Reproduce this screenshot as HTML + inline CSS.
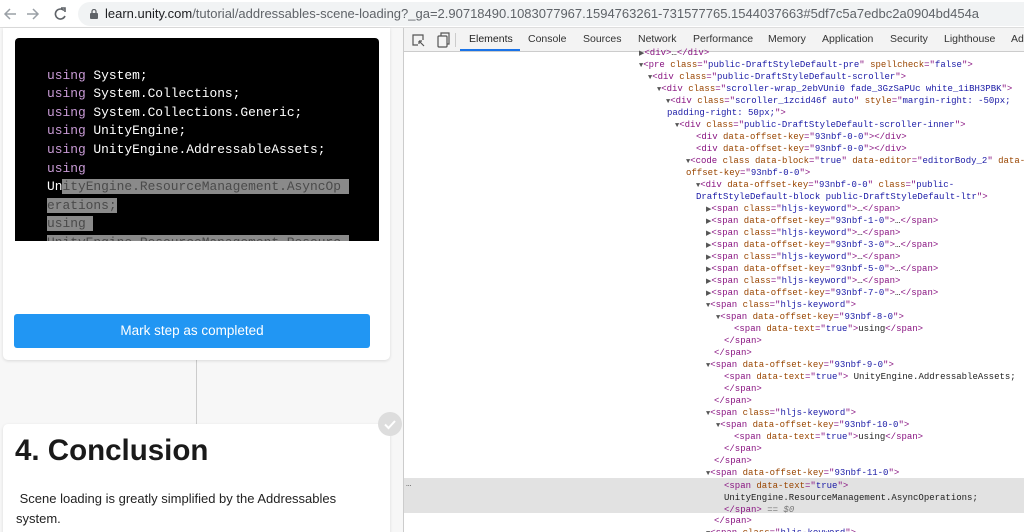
<!DOCTYPE html>
<html style="overflow:hidden;height:532px"><head><meta charset="utf-8"><style>
*{margin:0;padding:0;box-sizing:border-box}
body{width:1024px;height:532px;overflow:hidden;background:#fff;font-family:"Liberation Sans",sans-serif;position:relative}
.top{position:absolute;left:0;top:0;width:1024px;height:28px;background:#fff;border-bottom:1px solid #ddd}
.url{position:absolute;left:78px;top:2px;width:960px;height:24px;border-radius:12px;background:#f1f3f4;font-size:13px;line-height:24px;color:#5f6368;padding-left:27px;white-space:nowrap}
.url b{font-weight:normal;color:#202124}
.left{position:absolute;left:0;top:28px;width:403px;height:504px;background:#f7f7f7;overflow:hidden}
.card{position:absolute;background:#fff;border-radius:5px;box-shadow:0 1px 3px rgba(0,0,0,.12)}
.code{position:absolute;left:15px;top:38px;width:364px;height:203px;background:#000;border-radius:4px 4px 0 0;overflow:hidden;font-family:"Liberation Mono",monospace;font-size:12.9px;color:#fff}
.code div{position:absolute;left:32px;white-space:pre;height:18.6px;line-height:18.6px}
.k{color:#c99bd6}
.sel{background:#8a8a8a;color:#4a4a4a}
.btn{position:absolute;left:14px;top:314px;width:356px;height:34px;background:#2196f3;border-radius:3px;color:#fff;font-size:13.5px;text-align:center;line-height:34px}
.dt{position:absolute;left:403px;top:28px;width:621px;height:504px;background:#fff;border-left:1px solid #ccc}
.tabs{position:absolute;left:0;top:0;width:621px;height:24px;background:#f3f3f3;border-bottom:1px solid #ccc;font-size:10.5px;color:#333}
.tabs span{position:absolute;top:5px}
.l{position:absolute;font-family:"Liberation Mono",monospace;font-size:9px;line-height:12px;white-space:pre;color:#222}
.t{color:#881280}.a{color:#994500}.v{color:#1a1aa6}
.tr{color:#555;font-size:7px}
</style></head><body>
<div class="top">
<svg style="position:absolute;left:2px;top:6px" width="80" height="16" viewBox="0 0 80 16"><g fill="none" stroke="#9aa0a6" stroke-width="1.5"><path d="M14 8H3M8 3L3 8l5 5"/><path d="M25 8h11M31 3l5 5-5 5"/></g><g fill="none" stroke="#5f6368" stroke-width="1.6"><path d="M62 4.5A5 5 0 1 0 63 10"/><path d="M59 2h4v4" /></g></svg>
<div class="url"><svg style="position:absolute;left:12px;top:7px" width="8" height="10" viewBox="0 0 8 10"><rect x="0" y="4" width="8" height="6" rx="1" fill="#5f6368"/><path d="M2 4V2.5a2 2 0 0 1 4 0V4" fill="none" stroke="#5f6368" stroke-width="1.3"/></svg><b>learn.unity.com</b>/tutorial/addressables-scene-loading?_ga=2.90718490.1083077967.1594763261-731577765.1544037663#5df7c5a7edbc2a0904bd454a</div>
</div>
<div class="left">
<div style="position:absolute;left:196px;top:330px;width:1px;height:66px;background:#ccc"></div>
<div class="card" style="left:3px;top:396px;width:387px;height:120px"></div>
</div>
<div class="card" style="left:3px;top:28px;width:387px;height:332px;border-radius:0 0 5px 5px"></div>
<div class="code">
<div style="top:28.5px"><span class="k">using</span> System;</div>
<div style="top:47px"><span class="k">using</span> System.Collections;</div>
<div style="top:65.7px"><span class="k">using</span> System.Collections.Generic;</div>
<div style="top:84.3px"><span class="k">using</span> UnityEngine;</div>
<div style="top:103px"><span class="k">using</span> UnityEngine.AddressableAssets;</div>
<div style="top:121.5px"><span class="k">using</span></div>
<div style="top:140px">Un<span class="sel">ityEngine.ResourceManagement.AsyncOp </span></div>
<div style="top:158.7px"><span class="sel">erations;</span></div>
<div style="top:177.3px"><span class="sel">using </span></div>
<div style="top:196px"><span class="sel">UnityEngine.ResourceManagement.Resourc </span></div>
</div>
<div class="btn">Mark step as completed</div>
<div style="position:absolute;left:378px;top:412px;width:24px;height:24px;border-radius:50%;background:#ddd"><svg width="24" height="24"><path d="M7 12.5l3.5 3.5L17 9" fill="none" stroke="#fff" stroke-width="2"/></svg></div>
<div style="position:absolute;left:15px;top:434px;font-size:29.5px;font-weight:bold;color:#1a1a1a">4. Conclusion</div>
<div style="position:absolute;left:16px;top:489px;font-size:13px;line-height:20px;color:#222;width:360px"> &nbsp;Scene loading is greatly simplified by the Addressables system.</div>

<div class="dt">
<div class="tabs">
<svg style="position:absolute;left:6px;top:4px" width="44" height="16"><g fill="none" stroke="#555" stroke-width="1.2"><path d="M8 13H3V3h10v5"/><path d="M9 9l5 5M9 9h3M9 9v3"/><rect x="28" y="4" width="9" height="11" rx="1"/><path d="M31 4V1h8v11h-2"/></g></svg>
<div style="position:absolute;left:51px;top:5px;width:1px;height:14px;background:#ccc"></div>
<span style="left:65px;color:#222">Elements</span>
<div style="position:absolute;left:56px;top:21px;width:60px;height:2px;background:#1a73e8"></div>
<span style="left:124px">Console</span><span style="left:179px">Sources</span><span style="left:234px">Network</span><span style="left:289px">Performance</span><span style="left:364px">Memory</span><span style="left:418px">Application</span><span style="left:486px">Security</span><span style="left:540px">Lighthouse</span><span style="left:607px">Adb</span>
</div>
<div style="position:absolute;left:0;top:450px;width:621px;height:35px;background:#e2e2e2"></div>
<div class="l" style="left:2px;top:450px;color:#666">…</div>
</div>
<div class="l" style="left:639px;top:47px"><span class="tr">▶</span><span class="t">&lt;div&gt;</span>…<span class="t">&lt;/div&gt;</span></div>
<div class="l" style="left:639px;top:59px"><span class="tr">▼</span><span class="t">&lt;pre </span><span class="a">class</span><span class="t">="</span><span class="v">public-DraftStyleDefault-pre</span><span class="t">" </span><span class="a">spellcheck</span><span class="t">="</span><span class="v">false</span><span class="t">"&gt;</span></div>
<div class="l" style="left:648px;top:71px"><span class="tr">▼</span><span class="t">&lt;div </span><span class="a">class</span><span class="t">="</span><span class="v">public-DraftStyleDefault-scroller</span><span class="t">"&gt;</span></div>
<div class="l" style="left:657px;top:83px"><span class="tr">▼</span><span class="t">&lt;div </span><span class="a">class</span><span class="t">="</span><span class="v">scroller-wrap_2ebVUni0 fade_3GzSaPUc white_1iBH3PBK</span><span class="t">"&gt;</span></div>
<div class="l" style="left:666px;top:95px"><span class="tr">▼</span><span class="t">&lt;div </span><span class="a">class</span><span class="t">="</span><span class="v">scroller_1zcid46f auto</span><span class="t">" </span><span class="a">style</span><span class="t">="</span><span class="v">margin-right: -50px;</span></div>
<div class="l" style="left:667px;top:107px"><span class="v">padding-right: 50px;</span><span class="t">"&gt;</span></div>
<div class="l" style="left:675px;top:119px"><span class="tr">▼</span><span class="t">&lt;div </span><span class="a">class</span><span class="t">="</span><span class="v">public-DraftStyleDefault-scroller-inner</span><span class="t">"&gt;</span></div>
<div class="l" style="left:696px;top:131px"><span class="t">&lt;div </span><span class="a">data-offset-key</span><span class="t">="</span><span class="v">93nbf-0-0</span><span class="t">"&gt;&lt;/div&gt;</span></div>
<div class="l" style="left:696px;top:143px"><span class="t">&lt;div </span><span class="a">data-offset-key</span><span class="t">="</span><span class="v">93nbf-0-0</span><span class="t">"&gt;&lt;/div&gt;</span></div>
<div class="l" style="left:686px;top:155px"><span class="tr">▼</span><span class="t">&lt;code </span><span class="a">class data-block</span><span class="t">="</span><span class="v">true</span><span class="t">" </span><span class="a">data-editor</span><span class="t">="</span><span class="v">editorBody_2</span><span class="t">" </span><span class="a">data-</span></div>
<div class="l" style="left:686px;top:167px"><span class="a">offset-key</span><span class="t">="</span><span class="v">93nbf-0-0</span><span class="t">"&gt;</span></div>
<div class="l" style="left:696px;top:179px"><span class="tr">▼</span><span class="t">&lt;div </span><span class="a">data-offset-key</span><span class="t">="</span><span class="v">93nbf-0-0</span><span class="t">" </span><span class="a">class</span><span class="t">="</span><span class="v">public-</span></div>
<div class="l" style="left:696px;top:191px"><span class="v">DraftStyleDefault-block public-DraftStyleDefault-ltr</span><span class="t">"&gt;</span></div>
<div class="l" style="left:706px;top:203px"><span class="tr">▶</span><span class="t">&lt;span </span><span class="a">class</span><span class="t">="</span><span class="v">hljs-keyword</span><span class="t">"&gt;</span>…<span class="t">&lt;/span&gt;</span></div>
<div class="l" style="left:706px;top:215px"><span class="tr">▶</span><span class="t">&lt;span </span><span class="a">data-offset-key</span><span class="t">="</span><span class="v">93nbf-1-0</span><span class="t">"&gt;</span>…<span class="t">&lt;/span&gt;</span></div>
<div class="l" style="left:706px;top:227px"><span class="tr">▶</span><span class="t">&lt;span </span><span class="a">class</span><span class="t">="</span><span class="v">hljs-keyword</span><span class="t">"&gt;</span>…<span class="t">&lt;/span&gt;</span></div>
<div class="l" style="left:706px;top:239px"><span class="tr">▶</span><span class="t">&lt;span </span><span class="a">data-offset-key</span><span class="t">="</span><span class="v">93nbf-3-0</span><span class="t">"&gt;</span>…<span class="t">&lt;/span&gt;</span></div>
<div class="l" style="left:706px;top:251px"><span class="tr">▶</span><span class="t">&lt;span </span><span class="a">class</span><span class="t">="</span><span class="v">hljs-keyword</span><span class="t">"&gt;</span>…<span class="t">&lt;/span&gt;</span></div>
<div class="l" style="left:706px;top:263px"><span class="tr">▶</span><span class="t">&lt;span </span><span class="a">data-offset-key</span><span class="t">="</span><span class="v">93nbf-5-0</span><span class="t">"&gt;</span>…<span class="t">&lt;/span&gt;</span></div>
<div class="l" style="left:706px;top:275px"><span class="tr">▶</span><span class="t">&lt;span </span><span class="a">class</span><span class="t">="</span><span class="v">hljs-keyword</span><span class="t">"&gt;</span>…<span class="t">&lt;/span&gt;</span></div>
<div class="l" style="left:706px;top:287px"><span class="tr">▶</span><span class="t">&lt;span </span><span class="a">data-offset-key</span><span class="t">="</span><span class="v">93nbf-7-0</span><span class="t">"&gt;</span>…<span class="t">&lt;/span&gt;</span></div>
<div class="l" style="left:706px;top:299px"><span class="tr">▼</span><span class="t">&lt;span </span><span class="a">class</span><span class="t">="</span><span class="v">hljs-keyword</span><span class="t">"&gt;</span></div>
<div class="l" style="left:716px;top:311px"><span class="tr">▼</span><span class="t">&lt;span </span><span class="a">data-offset-key</span><span class="t">="</span><span class="v">93nbf-8-0</span><span class="t">"&gt;</span></div>
<div class="l" style="left:734px;top:323px"><span class="t">&lt;span </span><span class="a">data-text</span><span class="t">="</span><span class="v">true</span><span class="t">"&gt;</span>using<span class="t">&lt;/span&gt;</span></div>
<div class="l" style="left:724px;top:335px"><span class="t">&lt;/span&gt;</span></div>
<div class="l" style="left:714px;top:347px"><span class="t">&lt;/span&gt;</span></div>
<div class="l" style="left:706px;top:359px"><span class="tr">▼</span><span class="t">&lt;span </span><span class="a">data-offset-key</span><span class="t">="</span><span class="v">93nbf-9-0</span><span class="t">"&gt;</span></div>
<div class="l" style="left:724px;top:371px"><span class="t">&lt;span </span><span class="a">data-text</span><span class="t">="</span><span class="v">true</span><span class="t">"&gt;</span> UnityEngine.AddressableAssets;</div>
<div class="l" style="left:724px;top:383px"><span class="t">&lt;/span&gt;</span></div>
<div class="l" style="left:714px;top:395px"><span class="t">&lt;/span&gt;</span></div>
<div class="l" style="left:706px;top:407px"><span class="tr">▼</span><span class="t">&lt;span </span><span class="a">class</span><span class="t">="</span><span class="v">hljs-keyword</span><span class="t">"&gt;</span></div>
<div class="l" style="left:716px;top:419px"><span class="tr">▼</span><span class="t">&lt;span </span><span class="a">data-offset-key</span><span class="t">="</span><span class="v">93nbf-10-0</span><span class="t">"&gt;</span></div>
<div class="l" style="left:734px;top:431px"><span class="t">&lt;span </span><span class="a">data-text</span><span class="t">="</span><span class="v">true</span><span class="t">"&gt;</span>using<span class="t">&lt;/span&gt;</span></div>
<div class="l" style="left:724px;top:443px"><span class="t">&lt;/span&gt;</span></div>
<div class="l" style="left:714px;top:455px"><span class="t">&lt;/span&gt;</span></div>
<div class="l" style="left:706px;top:467px"><span class="tr">▼</span><span class="t">&lt;span </span><span class="a">data-offset-key</span><span class="t">="</span><span class="v">93nbf-11-0</span><span class="t">"&gt;</span></div>
<div class="l" style="left:724px;top:480px"><span class="t">&lt;span </span><span class="a">data-text</span><span class="t">="</span><span class="v">true</span><span class="t">"&gt;</span></div>
<div class="l" style="left:724px;top:492px">UnityEngine.ResourceManagement.AsyncOperations;</div>
<div class="l" style="left:724px;top:504px"><span class="t">&lt;/span&gt;</span><span style="color:#777"> == <i>$0</i></span></div>
<div class="l" style="left:714px;top:515px"><span class="t">&lt;/span&gt;</span></div>
<div class="l" style="left:706px;top:527px"><span class="tr">▼</span><span class="t">&lt;span </span><span class="a">class</span><span class="t">="</span><span class="v">hljs-keyword</span><span class="t">"&gt;</span></div>
</body></html>
